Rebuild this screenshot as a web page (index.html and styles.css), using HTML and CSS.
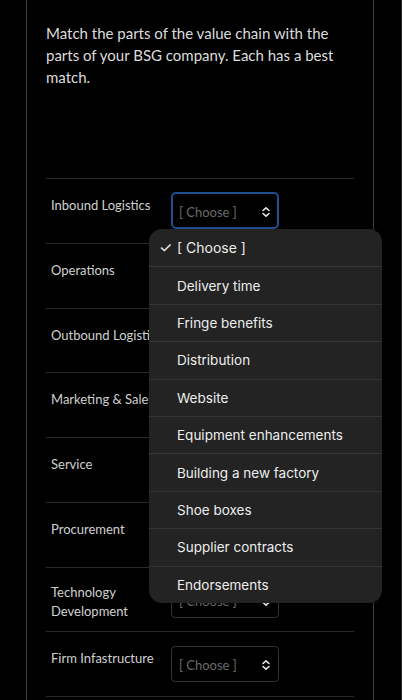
FILE: index.html
```html
<!DOCTYPE html>
<html lang="en">
<head>
<meta charset="utf-8">
<title>Value chain match</title>
<link rel="stylesheet" href="styles.css">
</head>
<body>
<div class="page">
  <div class="card">
    <p class="intro">Match the parts of the value chain with the parts of your BSG company. Each has a best match.</p>
    <div class="rows">
      <div class="row">
        <div class="label">Inbound Logistics</div>
        <div class="select-wrap">
          <div class="select focused"><span>[ Choose ]</span><svg class="arrows" viewBox="0 0 10 12" width="10" height="12"><path d="M2 4.5 L5 1.8 L8 4.5 M2 7.5 L5 10.2 L8 7.5" fill="none" stroke="#e6e6e6" stroke-width="1.6" stroke-linecap="round" stroke-linejoin="round"/></svg></div>
          <ul class="menu">
            <li class="checked"><span class="check">✓</span>[ Choose ]</li>
            <li>Delivery time</li>
            <li>Fringe benefits</li>
            <li>Distribution</li>
            <li>Website</li>
            <li>Equipment enhancements</li>
            <li>Building a new factory</li>
            <li>Shoe boxes</li>
            <li>Supplier contracts</li>
            <li>Endorsements</li>
          </ul>
        </div>
      </div>
      <div class="row">
        <div class="label">Operations</div>
        <div class="select-wrap"><div class="select"><span>[ Choose ]</span><svg class="arrows" viewBox="0 0 10 12" width="10" height="12"><path d="M2 4.5 L5 1.8 L8 4.5 M2 7.5 L5 10.2 L8 7.5" fill="none" stroke="#e6e6e6" stroke-width="1.6" stroke-linecap="round" stroke-linejoin="round"/></svg></div></div>
      </div>
      <div class="row">
        <div class="label">Outbound Logistics</div>
        <div class="select-wrap"><div class="select"><span>[ Choose ]</span><svg class="arrows" viewBox="0 0 10 12" width="10" height="12"><path d="M2 4.5 L5 1.8 L8 4.5 M2 7.5 L5 10.2 L8 7.5" fill="none" stroke="#e6e6e6" stroke-width="1.6" stroke-linecap="round" stroke-linejoin="round"/></svg></div></div>
      </div>
      <div class="row">
        <div class="label">Marketing &amp; Sales</div>
        <div class="select-wrap"><div class="select"><span>[ Choose ]</span><svg class="arrows" viewBox="0 0 10 12" width="10" height="12"><path d="M2 4.5 L5 1.8 L8 4.5 M2 7.5 L5 10.2 L8 7.5" fill="none" stroke="#e6e6e6" stroke-width="1.6" stroke-linecap="round" stroke-linejoin="round"/></svg></div></div>
      </div>
      <div class="row">
        <div class="label">Service</div>
        <div class="select-wrap"><div class="select"><span>[ Choose ]</span><svg class="arrows" viewBox="0 0 10 12" width="10" height="12"><path d="M2 4.5 L5 1.8 L8 4.5 M2 7.5 L5 10.2 L8 7.5" fill="none" stroke="#e6e6e6" stroke-width="1.6" stroke-linecap="round" stroke-linejoin="round"/></svg></div></div>
      </div>
      <div class="row">
        <div class="label">Procurement</div>
        <div class="select-wrap"><div class="select"><span>[ Choose ]</span><svg class="arrows" viewBox="0 0 10 12" width="10" height="12"><path d="M2 4.5 L5 1.8 L8 4.5 M2 7.5 L5 10.2 L8 7.5" fill="none" stroke="#e6e6e6" stroke-width="1.6" stroke-linecap="round" stroke-linejoin="round"/></svg></div></div>
      </div>
      <div class="row">
        <div class="label">Technology Development</div>
        <div class="select-wrap"><div class="select"><span>[ Choose ]</span><svg class="arrows" viewBox="0 0 10 12" width="10" height="12"><path d="M2 4.5 L5 1.8 L8 4.5 M2 7.5 L5 10.2 L8 7.5" fill="none" stroke="#e6e6e6" stroke-width="1.6" stroke-linecap="round" stroke-linejoin="round"/></svg></div></div>
      </div>
      <div class="row">
        <div class="label">Firm Infastructure</div>
        <div class="select-wrap"><div class="select"><span>[ Choose ]</span><svg class="arrows" viewBox="0 0 10 12" width="10" height="12"><path d="M2 4.5 L5 1.8 L8 4.5 M2 7.5 L5 10.2 L8 7.5" fill="none" stroke="#e6e6e6" stroke-width="1.6" stroke-linecap="round" stroke-linejoin="round"/></svg></div></div>
      </div>
    </div>
  </div>
</div>
</body>
</html>
```

FILE: styles.css
```css
html, body {
  margin: 0;
  padding: 0;
  background: #000;
  height: 700px;
  overflow: hidden;
}

.page {
  width: 401px;
  height: 700px;
  border-right: 1px solid #262626;
  font-family: Lato, "Noto Sans", sans-serif;
}

.card {
  margin-left: 26px;
  width: 348px;
  height: 700px;
  border-left: 1px solid #3a3a3a;
  border-right: 1px solid #3a3a3a;
  padding: 0 19px 0 19px;
  box-sizing: border-box;
}

.intro {
  margin: 0;
  padding-top: 22px;
  font-size: 15px;
  line-height: 22px;
  color: #dcdcdc;
  height: 179px;
  box-sizing: border-box;
  border-bottom: 1px solid #2a2a2a;
}

.row {
  display: grid;
  grid-template-columns: 125px 108px;
  align-items: start;
  height: 64.75px;
  box-sizing: border-box;
  border-bottom: 1px solid #2a2a2a;
  padding-top: 14px;
}

.label {
  font-size: 13px;
  line-height: 19px;
  color: #d0d0d0;
  padding: 3px 0 0 5px;
  width: 112px;
}

.row:nth-child(3) .label,
.row:nth-child(4) .label {
  white-space: nowrap;
}

.row:nth-child(7) .label {
  padding-top: 1px;
}

.select-wrap {
  position: relative;
}

.select {
  height: 36px;
  box-sizing: border-box;
  border: 1px solid #333;
  border-radius: 4px;
  background: #000;
  display: flex;
  align-items: center;
  justify-content: space-between;
  padding: 2px 7px 0 7px;
  font-size: 13px;
  color: #6a6a6a;
}

.select.focused {
  border: 2px solid #1f4f8e;
  border-radius: 5px;
  padding: 2px 6px 0 6px;
  margin-top: -1px;
  height: 37px;
}

.arrows {
  display: block;
}

.menu {
  position: absolute;
  left: -22px;
  top: 36px;
  width: 233px;
  margin: 0;
  padding: 0;
  list-style: none;
  background: #232323;
  border-radius: 13px;
  overflow: hidden;
  font-family: Inter, "Noto Sans", sans-serif;
  font-size: 13.5px;
  color: #ededed;
  z-index: 5;
}

.menu li {
  height: 37.4px;
  box-sizing: border-box;
  display: flex;
  align-items: center;
  padding-left: 28px;
  border-top: 1px solid #363636;
  position: relative;
}

.menu li:first-child {
  border-top: none;
}

.checked {
  font-size: 14px;
}

.check {
  position: absolute;
  left: 10px;
  font-size: 15px;
  font-weight: 400;
  color: #ededed;
}
```
